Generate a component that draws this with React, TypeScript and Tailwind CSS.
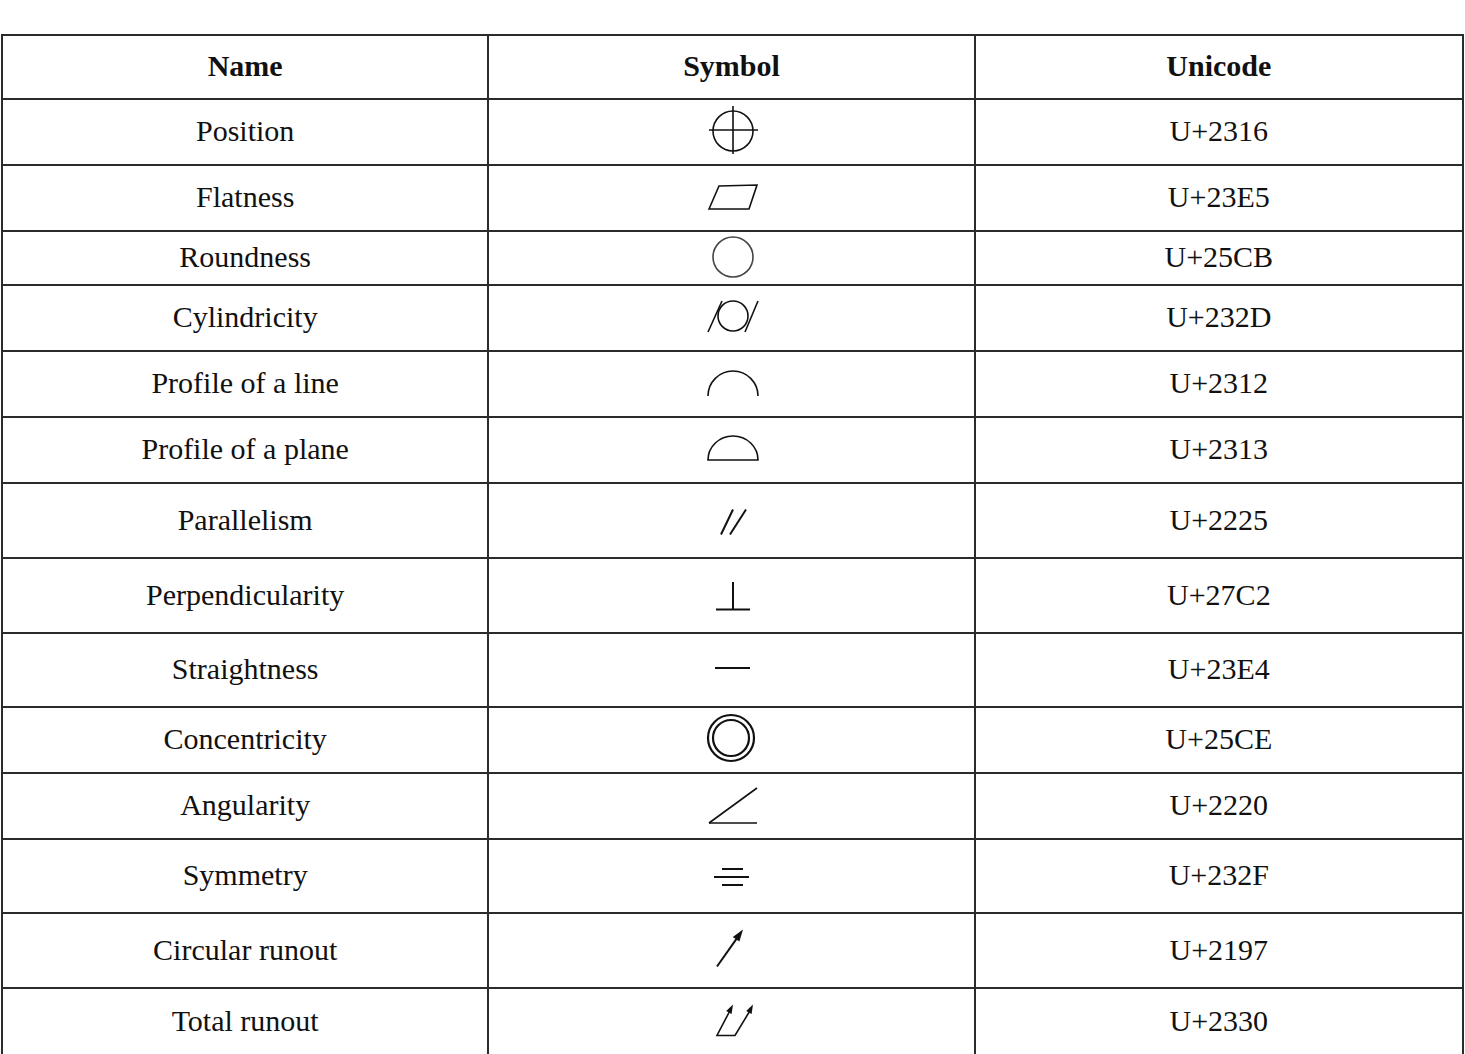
import type { ReactNode } from "react";

type Row = { name: string; code: string; h: string; icon: ReactNode };

const S = { stroke: "#111", fill: "none", strokeWidth: 1.6 };

const ROWS: Row[] = [
  {
    name: "Position",
    code: "U+2316",
    h: "h-[66px]",
    icon: (
      <g {...S}>
        <circle cx="30" cy="29" r="20" />
        <line x1="30" y1="4" x2="30" y2="52" />
        <line x1="6" y1="28" x2="55" y2="28" />
      </g>
    ),
  },
  {
    name: "Flatness",
    code: "U+23E5",
    h: "h-[66px]",
    icon: <polygon {...S} points="6,41 16,18 54,17 46,41" />,
  },
  {
    name: "Roundness",
    code: "U+25CB",
    h: "h-[54px]",
    icon: <circle {...S} stroke="#444" cx="30" cy="29" r="20" />,
  },
  {
    name: "Cylindricity",
    code: "U+232D",
    h: "h-[66px]",
    icon: (
      <g {...S}>
        <circle cx="30" cy="28" r="15" />
        <line x1="5" y1="44" x2="19" y2="13" />
        <line x1="42" y1="44" x2="55" y2="13" />
      </g>
    ),
  },
  {
    name: "Profile of a line",
    code: "U+2312",
    h: "h-[66px]",
    icon: <path {...S} d="M5 42 A25 25 0 0 1 55 42" />,
  },
  {
    name: "Profile of a plane",
    code: "U+2313",
    h: "h-[66px]",
    icon: <path {...S} d="M5 40 A25 24 0 0 1 55 40 Z" />,
  },
  {
    name: "Parallelism",
    code: "U+2225",
    h: "h-[75px]",
    icon: (
      <g {...S} strokeWidth={2}>
        <line x1="18" y1="43.5" x2="30" y2="18.5" />
        <line x1="27" y1="43.5" x2="43" y2="18.5" />
      </g>
    ),
  },
  {
    name: "Perpendicularity",
    code: "U+27C2",
    h: "h-[75px]",
    icon: (
      <g {...S} strokeWidth={2}>
        <line x1="30" y1="16" x2="30" y2="43.5" />
        <line x1="13" y1="43.5" x2="47" y2="43.5" />
      </g>
    ),
  },
  {
    name: "Straightness",
    code: "U+23E4",
    h: "h-[74px]",
    icon: <line {...S} strokeWidth={2} x1="12" y1="28" x2="47" y2="28" />,
  },
  {
    name: "Concentricity",
    code: "U+25CE",
    h: "h-[66px]",
    icon: (
      <g {...S} strokeWidth={2.2}>
        <circle cx="28" cy="28" r="23" />
        <circle cx="28" cy="28" r="18" />
      </g>
    ),
  },
  {
    name: "Angularity",
    code: "U+2220",
    h: "h-[66px]",
    icon: (
      <g {...S}>
        <line x1="6" y1="47" x2="54" y2="47" />
        <line x1="6" y1="47" x2="54" y2="12" />
      </g>
    ),
  },
  {
    name: "Symmetry",
    code: "U+232F",
    h: "h-[74px]",
    icon: (
      <g {...S} strokeWidth={2}>
        <line x1="19" y1="23" x2="40" y2="23" />
        <line x1="11" y1="31" x2="46" y2="31" />
        <line x1="19" y1="39" x2="40" y2="39" />
      </g>
    ),
  },
  {
    name: "Circular runout",
    code: "U+2197",
    h: "h-[75px]",
    icon: (
      <g>
        <line {...S} strokeWidth={2} x1="14" y1="45.5" x2="33.5" y2="17.8" />
        <polygon fill="#111" points="40,8.5 36.4,20.6 29.8,16" />
      </g>
    ),
  },
  {
    name: "Total runout",
    code: "U+2330",
    h: "h-[68px]",
    icon: (
      <g transform="translate(0 5)">
        <path {...S} d="M26.5 14.5 L14 38.5 L32 38.5 L46.5 14.5" />
        <polygon fill="#111" points="30,7.5 28.6,16.9 23.2,14.1" />
        <polygon fill="#111" points="50,7.5 48.6,16.9 43.2,14.1" />
      </g>
    ),
  },
];

const cell = "flex min-h-0 items-center justify-center border-r-2 border-[#2b2b2b] last:border-r-0";
const text = `${cell} pb-[3px]`;

export default function App() {
  return (
    <div className="h-[1054px] overflow-hidden bg-white font-['Liberation_Serif','Times_New_Roman',serif] text-[30px] text-[#111]">
      <div className="ml-[1px] mt-[34px] w-[1463px] border-x-2 border-t-2 border-[#2b2b2b]">
        <div className="grid h-[64px] grid-cols-3 grid-rows-[100%] border-b-2 border-[#2b2b2b] font-bold">
          <div className={text}>Name</div>
          <div className={text}>Symbol</div>
          <div className={text}>Unicode</div>
        </div>
        {ROWS.map((r) => (
          <div key={r.name} className={`grid grid-cols-3 grid-rows-[100%] border-b-2 border-[#2b2b2b] ${r.h}`}>
            <div className={text}>{r.name}</div>
            <div className={cell}>
              <svg width="60" height="50" viewBox="-2 5 60 50" className="overflow-visible">
                {r.icon}
              </svg>
            </div>
            <div className={text}>{r.code}</div>
          </div>
        ))}
      </div>
    </div>
  );
}
